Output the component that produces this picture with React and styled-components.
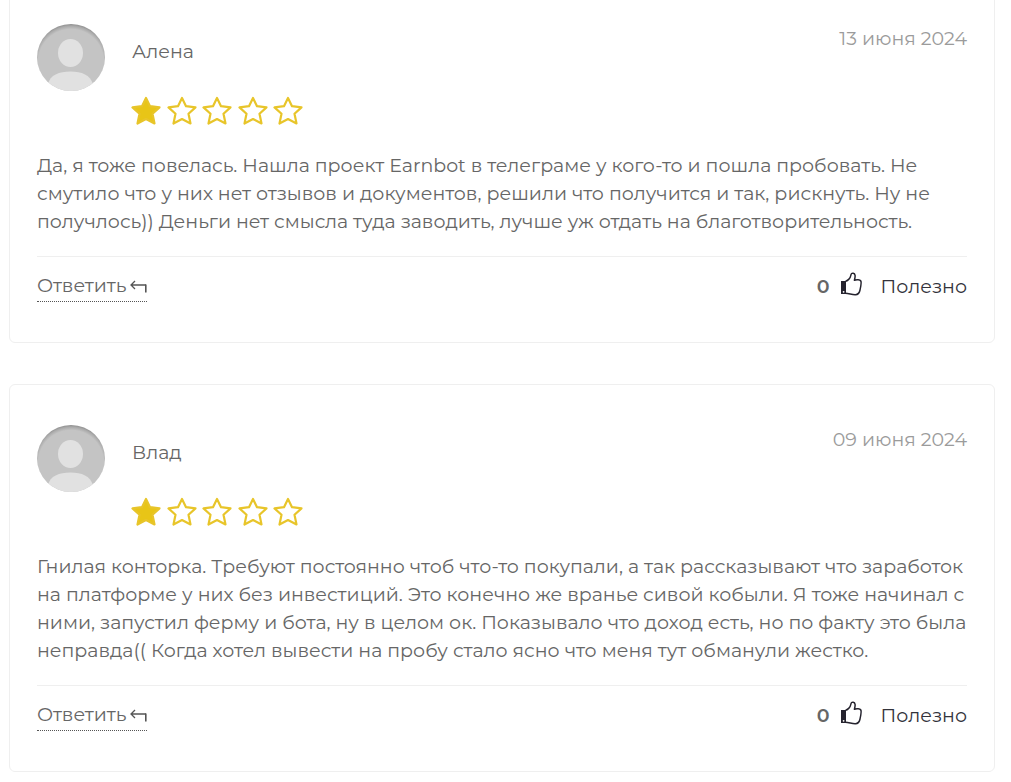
import React from 'react';
import styled, { createGlobalStyle } from 'styled-components';

const GlobalStyle = createGlobalStyle`
  * {
    box-sizing: border-box;
  }

  body {
    margin: 0;
    background: #ffffff;
    color: #666666;
    font-family: Montserrat, Inter, 'Noto Sans', sans-serif;
    font-size: 19px;
    font-weight: 400;
    line-height: 28px;
    overflow: hidden;
  }
`;

const ReviewList = styled.main`
  display: flex;
  flex-direction: column;
  gap: 41px;
  margin: -17px 16px 0 9px;
`;

const ReviewCard = styled.article`
  padding: 40px 27px;
  background: #ffffff;
  border: 1px solid #efefef;
  border-radius: 6px;
`;

const ReviewHeader = styled.header`
  display: flex;
  align-items: flex-start;
  height: 128px;
`;

const AvatarIcon = styled.svg`
  flex: none;
  width: 68px;
  height: 68px;
  margin-right: 26px;
`;

const Author = styled.div`
  flex: 1;
  padding-top: 14px;
`;

const AuthorName = styled.h3`
  margin: 0 0 30px 1px;
  font-size: 19px;
  font-weight: 400;
`;

const Stars = styled.div`
  display: flex;
  justify-content: space-between;
  width: 172px;
`;

const StarIcon = styled.svg`
  width: 30px;
  height: 30px;
  fill: ${({ $filled }) => ($filled ? '#e8c517' : 'none')};
  stroke: #e8c52a;
  stroke-width: 2.2;
  stroke-linejoin: round;
`;

const ReviewDate = styled.time`
  padding-top: 1px;
  color: #9b9b9b;
`;

const ReviewText = styled.p`
  margin: 0 0 20px;
  white-space: pre-line;
`;

const ReviewFooter = styled.footer`
  display: flex;
  justify-content: space-between;
  align-items: flex-start;
  padding-top: 15px;
  border-top: 1px solid #efefef;
`;

const ReplyLink = styled.a`
  display: flex;
  align-items: center;
  gap: 4px;
  padding-bottom: 1px;
  color: #666666;
  text-decoration: none;
  border-bottom: 1px dotted #555555;
`;

const ReplyIcon = styled.svg`
  width: 17px;
  height: 14px;
  fill: none;
  stroke: #555555;
`;

const Votes = styled.div`
  display: flex;
  align-items: center;
`;

const VoteCount = styled.span`
  margin-right: 11px;
  font-weight: 600;
`;

const UsefulButton = styled.button`
  display: flex;
  align-items: center;
  gap: 18px;
  padding: 0;
  background: none;
  border: 0;
  color: #33333b;
  font: inherit;
  cursor: pointer;
`;

const ThumbIcon = styled.svg`
  width: 22px;
  height: 24px;
  margin-bottom: 6px;
  fill: none;
  stroke: #25232e;
`;

const reviews = [
  {
    id: 1,
    author: 'Алена',
    date: '13 июня 2024',
    dateTime: '2024-06-13',
    rating: 1,
    votes: 0,
    text: `Да, я тоже повелась. Нашла проект Earnbot в телеграме у кого-то и пошла пробовать. Не
смутило что у них нет отзывов и документов, решили что получится и так, рискнуть. Ну не
получлось)) Деньги нет смысла туда заводить, лучше уж отдать на благотворительность.`,
  },
  {
    id: 2,
    author: 'Влад',
    date: '09 июня 2024',
    dateTime: '2024-06-09',
    rating: 1,
    votes: 0,
    text: `Гнилая конторка. Требуют постоянно чтоб что-то покупали, а так рассказывают что заработок
на платформе у них без инвестиций. Это конечно же вранье сивой кобыли. Я тоже начинал с
ними, запустил ферму и бота, ну в целом ок. Показывало что доход есть, но по факту это была
неправда(( Когда хотел вывести на пробу стало ясно что меня тут обманули жестко.`,
  },
];

const Avatar = ({ id }) => (
  <AvatarIcon viewBox="0 0 68 68" aria-hidden="true">
    <defs>
      <clipPath id={`circle-${id}`}>
        <ellipse cx="34" cy="33.5" rx="34" ry="33.5" />
      </clipPath>
      <radialGradient id={`shade-${id}`} gradientUnits="userSpaceOnUse" cx="34" cy="38" r="39">
        <stop offset="0.84" stopColor="#c4c4c4" />
        <stop offset="0.92" stopColor="#aaaaaa" />
        <stop offset="1" stopColor="#808080" />
      </radialGradient>
    </defs>
    <g clipPath={`url(#circle-${id})`}>
      <rect width="68" height="68" fill={`url(#shade-${id})`} />
      <ellipse cx="33.5" cy="29" rx="12.5" ry="14" fill="#e1e1e1" />
      <path d="M11 60C13 51 22 47.500 33.500 47.500S53 51 56 60V68H11Z" fill="#e1e1e1" />
    </g>
  </AvatarIcon>
);

const Rating = ({ value }) => (
  <Stars role="img" aria-label={`${value} / 5`}>
    {[1, 2, 3, 4, 5].map((n) => (
      <StarIcon key={n} viewBox="0 0 30 30" $filled={n <= value}>
        <path d="M15 2L19 10.200L28.500 11.400L21.500 17.800L23.500 27.500L15 23L6.500 27.500L8.500 17.800L1.500 11.400L11 10.200Z" />
      </StarIcon>
    ))}
  </Stars>
);

const Review = ({ review }) => (
  <ReviewCard>
    <ReviewHeader>
      <Avatar id={review.id} />
      <Author>
        <AuthorName>{review.author}</AuthorName>
        <Rating value={review.rating} />
      </Author>
      <ReviewDate dateTime={review.dateTime}>{review.date}</ReviewDate>
    </ReviewHeader>
    <ReviewText>{review.text}</ReviewText>
    <ReviewFooter>
      <ReplyLink href="#reply">
        Ответить
        <ReplyIcon viewBox="0 0 17 14" aria-hidden="true">
          <path d="M5 2L1 6L5 10M1 6H16" strokeWidth="1.3" />
          <path d="M15.800 5.500V13.500" strokeWidth="1.6" />
        </ReplyIcon>
      </ReplyLink>
      <Votes>
        <VoteCount>{review.votes}</VoteCount>
        <UsefulButton type="button">
          <ThumbIcon viewBox="0 0 22 24" aria-hidden="true">
            <path d="M1 9H6V22H1Z" fill="#25232e" stroke="none" />
            <circle cx="3.6" cy="19.8" r="0.9" fill="#ffffff" stroke="none" />
            <path
              d="M5.500 9.200C7.500 9 10.300 6.500 10.800 3.500C11.100 1.500 12 1 13.200 1.200C15.400 1.600 15.600 4 14.400 8.200C16.500 7.500 20 7.700 20.800 9C21.600 10.300 20.700 15 19.900 18.500C19.200 21.500 18.300 22.500 15.500 22.700C12 22.900 9 21.300 5.500 21.300"
              strokeWidth="1.5"
              strokeLinejoin="round"
            />
          </ThumbIcon>
          Полезно
        </UsefulButton>
      </Votes>
    </ReviewFooter>
  </ReviewCard>
);

const App = () => (
  <>
    <GlobalStyle />
    <ReviewList>
      {reviews.map((review) => (
        <Review key={review.id} review={review} />
      ))}
    </ReviewList>
  </>
);

export default App;
